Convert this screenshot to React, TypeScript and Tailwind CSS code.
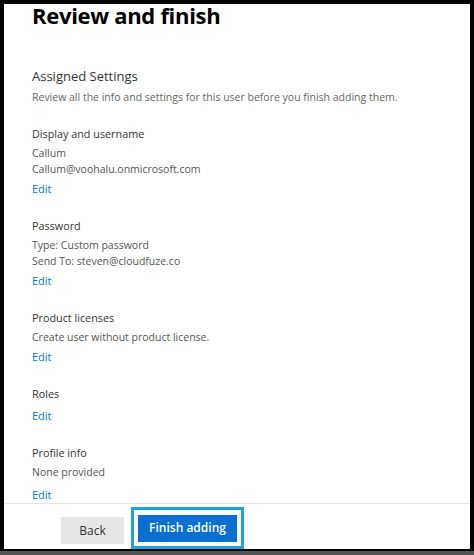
import React from 'react';

const font = { fontFamily: "'Open Sans', 'Noto Sans', 'Liberation Sans', sans-serif" };

type Section = {
  title: string;
  lines: string[];
  editGap?: string;
};

const sections: Section[] = [
  { title: 'Display and username', lines: ['Callum', 'Callum@voohalu.onmicrosoft.com'] },
  { title: 'Password', lines: ['Type: Custom password', 'Send To: steven@cloudfuze.co'] },
  { title: 'Product licenses', lines: ['Create user without product license.'] },
  { title: 'Roles', lines: [], editGap: 'mt-[6px]' },
  { title: 'Profile info', lines: ['None provided'], editGap: 'mt-[7px]' },
];

function ReviewSection({ section }: { section: Section }) {
  return (
    <div className="pb-[21px] last:pb-0">
      <h3 className="text-[10.8px] leading-[16px] text-[#333]">{section.title}</h3>
      <div className="mt-[3px]">
        {section.lines.map((line) => (
          <p key={line} className="text-[10.5px] leading-[16px] text-[#555]">
            {line}
          </p>
        ))}
      </div>
      <a href="#" className={`${section.editGap ?? 'mt-[4px]'} block text-[11px] leading-[16px] text-[#0078d4]`}>
        Edit
      </a>
    </div>
  );
}

export default function App() {
  return (
    <div className="h-[555px] w-[474px] overflow-hidden bg-black" style={font}>
      <div className="ml-[4px] mt-[4px] flex h-[545px] w-[466px] flex-col bg-white">
        <div className="min-h-0 flex-1 pl-[28px] pr-4">
          <h1 className="-mt-[2px] text-[22px] font-bold leading-[26px] tracking-[-0.3px] text-black">
            Review and finish
          </h1>

          <h2 className="mt-[38px] text-[13px] leading-[20px] text-[#333]">Assigned Settings</h2>
          <p className="mt-[3px] text-[10.5px] leading-[16px] text-[#666]">
            Review all the info and settings for this user before you finish adding them.
          </p>

          <div className="mt-[21px]">
            {sections.map((s) => (
              <ReviewSection key={s.title} section={s} />
            ))}
          </div>
        </div>

        <div className="flex h-[46px] shrink-0 items-start border-t border-[#e5e5e5] pl-[57px]">
          <button className="mt-[13px] h-[27px] w-[63px] bg-[#e6e6e6] text-[12px] text-[#333]">Back</button>
          <div className="ml-[7px] mt-[3px] border-[3px] border-[#1aa3e8] p-[4px]">
            <button className="h-[27px] w-[99px] bg-[#0a6fd0] text-[12px] font-semibold text-white">
              Finish adding
            </button>
          </div>
        </div>
      </div>
      <div className="mt-[2px] h-[4px] w-full bg-[#555]" />
    </div>
  );
}
